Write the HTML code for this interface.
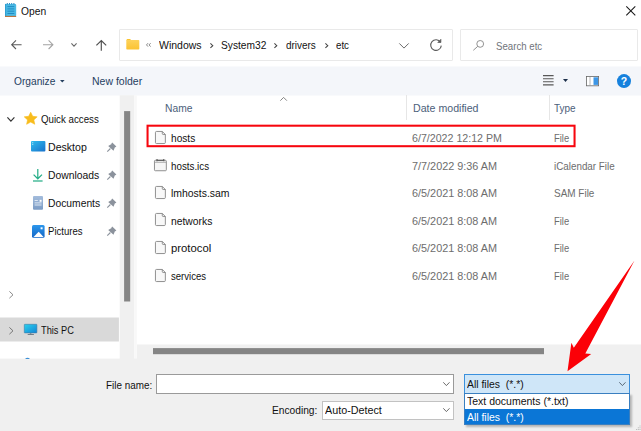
<!DOCTYPE html>
<html><head><meta charset="utf-8">
<style>
*{box-sizing:border-box;margin:0;padding:0}
html,body{width:641px;height:431px;overflow:hidden;background:#fff}
body{font-family:"Liberation Sans",sans-serif;font-size:12px;color:#111;position:relative}
.a{position:absolute}
.t{position:absolute;white-space:nowrap;line-height:14px;font-size:12px;transform-origin:0 0}
svg{position:absolute;overflow:visible}
</style></head><body>
<!-- panels / backgrounds -->
<svg style="left:0;top:0" width="641" height="431" viewBox="0 0 641 431">
<rect x="0" y="66.500" width="641" height="29" fill="#f4f6fa"/>
<rect x="119.700" y="95.300" width="14.500" height="264" fill="#f0f0f0"/>
<rect x="134.200" y="95.300" width="2.600" height="264" fill="#f8f8f8"/>
<rect x="124.100" y="111.100" width="6.100" height="190.400" fill="#858585"/>
<rect x="137" y="344.500" width="504" height="15" fill="#f0f0f0"/>
<rect x="153" y="348.100" width="391" height="6.100" fill="#858585"/>
<rect x="0" y="317.500" width="118.900" height="24" fill="#d9d9d9"/>
<rect x="0" y="358.600" width="641" height="73" fill="#f0f0f0"/>
</svg>
<!-- title bar -->
<svg style="left:5.300px;top:3px" width="11.200" height="14" viewBox="0 0 11.200 14">
<rect x="0" y="0.900" width="11.200" height="12.300" rx="1" fill="#4ab9e4"/>
<rect x="0" y="0.900" width="1.200" height="12.300" fill="#2f9fd2"/>
<rect x="0" y="12.900" width="11.200" height="1.100" fill="#b9733f"/>
<path d="M2.300 0V1.500M4.500 0V1.500M6.700 0V1.500M8.900 0V1.500" stroke="#2f8fc6" stroke-width="1.100"/>
<path d="M2.400 3.600H9.300M2.400 5.900H9.300M2.400 8.200H9.300M2.400 10.500H9.300" stroke="#1f8dc3" stroke-width="1"/>
</svg>
<svg style="left:626px;top:6px" width="10" height="10" viewBox="0 0 10 10"><path d="M0.300 0.300L9.300 9.300M9.300 0.300L0.300 9.300" stroke="#1a1a1a" stroke-width="1.050" fill="none"/></svg>

<!-- nav arrows -->
<svg style="left:10.900px;top:40.300px" width="10.600" height="9.400" viewBox="0 0 10.600 9.400"><path d="M10.600 4.700H0.900M5 0.400L0.700 4.700L5 9" stroke="#5a5a5a" stroke-width="1.100" fill="none"/></svg>
<svg style="left:42.700px;top:40.300px" width="10.600" height="9.400" viewBox="0 0 10.600 9.400"><path d="M0 4.700H9.700M5.600 0.400L9.900 4.700L5.600 9" stroke="#a3a3a3" stroke-width="1.100" fill="none"/></svg>
<svg style="left:70.800px;top:42.800px" width="6" height="3.800" viewBox="0 0 6 3.800"><path d="M0.400 0.400L3 3.100L5.600 0.400" stroke="#6a6a6a" stroke-width="1.100" fill="none"/></svg>
<svg style="left:95.900px;top:40.300px" width="10.600" height="10.700" viewBox="0 0 10.600 10.700"><path d="M5.300 10.700V0.900M0.400 5.400L5.300 0.500L10.200 5.400" stroke="#4f4f4f" stroke-width="1.150" fill="none"/></svg>

<!-- address box -->
<div class="a" style="left:119px;top:29px;width:334px;height:32px;border:1px solid #e9e9e9;border-radius:1px;background:#fff"></div>
<svg style="left:126.400px;top:38.900px" width="13.300" height="10.400" viewBox="0 0 13.300 10.400"><defs><linearGradient id="gf" x1="0" y1="0" x2="0" y2="1"><stop offset="0" stop-color="#fdd25a"/><stop offset="1" stop-color="#fbc332"/></linearGradient></defs><path d="M0.600 0.800Q0.600 0 1.400 0H4Q4.700 0 4.700 0.800V2H0.600Z" fill="#fbc42e"/><rect x="0.300" y="1.100" width="13" height="9.300" rx="0.700" fill="url(#gf)"/></svg>
<svg style="left:146.200px;top:43.200px" width="5" height="3.800" viewBox="0 0 5 3.800"><path d="M2 0.200L0.500 1.900L2 3.600M4.600 0.200L3.100 1.900L4.600 3.600" stroke="#777" stroke-width="0.900" fill="none"/></svg>
<svg style="left:209.900px;top:43px" width="3.200" height="5.400" viewBox="0 0 3.200 5.400"><path d="M0.400 0.400L2.800 2.700L0.400 5" stroke="#444" stroke-width="1.050" fill="none"/></svg>
<svg style="left:274.200px;top:43px" width="3.200" height="5.400" viewBox="0 0 3.200 5.400"><path d="M0.400 0.400L2.800 2.700L0.400 5" stroke="#444" stroke-width="1.050" fill="none"/></svg>
<svg style="left:324.700px;top:43px" width="3.200" height="5.400" viewBox="0 0 3.200 5.400"><path d="M0.400 0.400L2.800 2.700L0.400 5" stroke="#444" stroke-width="1.050" fill="none"/></svg>
<svg style="left:398.500px;top:42.500px" width="10" height="6" viewBox="0 0 10 6"><path d="M0.300 0.400L5 5.100L9.700 0.400" stroke="#5a5a5a" stroke-width="0.900" fill="none"/></svg>
<svg style="left:430px;top:39px" width="13" height="12" viewBox="430 39 13 12"><path d="M441.300 45.600A5.300 5.300 0 1 1 440.500 42.200" stroke="#5c5c5c" stroke-width="1.100" fill="none"/><path d="M440.900 39.300V42.500H437.800Z" fill="#5c5c5c" stroke="#5c5c5c" stroke-width="0.700" stroke-linejoin="round"/></svg>

<!-- search box -->
<div class="a" style="left:460px;top:29px;width:178px;height:32px;border:1px solid #e9e9e9;border-radius:1px;background:#fff"></div>
<svg style="left:473px;top:39.500px" width="11" height="11" viewBox="0 0 11 11"><circle cx="7.200" cy="3.900" r="3.400" stroke="#868686" stroke-width="0.900" fill="none"/><path d="M4.700 6.400L0.300 10.300" stroke="#868686" stroke-width="0.900"/></svg>

<!-- toolbar icons -->
<svg style="left:60px;top:79.500px" width="5" height="3" viewBox="0 0 5 3"><path d="M0 0H4.600L2.300 2.600Z" fill="#26405f"/></svg>
<svg style="left:542.500px;top:75px" width="10.600" height="10.600" viewBox="0 0 10.600 10.600"><path d="M0 0.700H10.600M0 3.750H10.600M0 6.800H10.600M0 9.850H10.600" stroke="#585858" stroke-width="1.150"/></svg>
<svg style="left:562.500px;top:79px" width="5" height="3" viewBox="0 0 5 3"><path d="M0 0H5L2.500 3Z" fill="#1c2f4a"/></svg>
<svg style="left:586px;top:75.500px" width="13" height="10" viewBox="0 0 13 10"><rect x="0.400" y="0.400" width="12.200" height="9.400" fill="#fff" stroke="#666" stroke-width="0.800"/><rect x="7.500" y="1.300" width="4.600" height="7.600" fill="#3d96e6"/><path d="M4 0.800V9.200" stroke="#888" stroke-width="0.600"/></svg>
<svg style="left:617.400px;top:73.500px" width="14" height="14.400" viewBox="0 0 14 14.400"><circle cx="7" cy="7.100" r="7" fill="#1681dd"/><text x="7" y="11" text-anchor="middle" font-family="Liberation Sans, sans-serif" font-weight="bold" font-size="10.500" fill="#fff">?</text></svg>

<!-- left pane icons -->
<svg style="left:7px;top:116.500px" width="8" height="5" viewBox="0 0 8 5"><path d="M0.400 0.400L3.900 4.200L7.400 0.400" stroke="#333" stroke-width="1.200" fill="none"/></svg>
<svg style="left:24px;top:112.300px" width="13.400" height="12.400" viewBox="0 0 14 13"><path d="M7 0.200L9.100 4.500L13.800 5.100L10.300 8.300L11.300 12.900L7 10.600L2.700 12.900L3.700 8.300L0.200 5.100L4.900 4.500Z" fill="#f8bc1c" stroke="#f8bc1c" stroke-width="0.600" stroke-linejoin="round"/></svg>

<svg style="left:30.700px;top:141.300px" width="14.400" height="10.400" viewBox="0 0 14.400 10.400"><defs><linearGradient id="gd" x1="0" y1="0" x2="1" y2="1"><stop offset="0" stop-color="#2fbdee"/><stop offset="1" stop-color="#1872cc"/></linearGradient></defs><rect width="14.400" height="10.400" rx="1" fill="url(#gd)"/><rect x="1.300" y="1.300" width="0.900" height="0.900" fill="#e8f8ff"/><rect x="1.300" y="3" width="0.900" height="0.900" fill="#d0f0ff"/></svg>
<svg style="left:33px;top:169px" width="9.600" height="12.800" viewBox="0 0 9.600 12.800"><path d="M4.800 0V9.600M0.600 5.600L4.800 9.800L9 5.600" stroke="#27ae88" stroke-width="1.250" fill="none"/><path d="M0 12H9.600" stroke="#27ae88" stroke-width="1.250"/></svg>
<svg style="left:33px;top:196px" width="10" height="13.700" viewBox="0 0 10 13.700"><defs><linearGradient id="gdoc" x1="0" y1="0" x2="0" y2="1"><stop offset="0" stop-color="#a3bcdc"/><stop offset="1" stop-color="#7c9cc5"/></linearGradient></defs><rect width="10" height="13.700" rx="1" fill="url(#gdoc)"/><rect x="6.600" y="3.800" width="2" height="2" fill="#fff"/><path d="M1.600 4.500H4.800M1.600 6.900H8.600M1.600 9H8.600" stroke="#e6eef8" stroke-width="0.900"/></svg>
<svg style="left:31.500px;top:224.800px" width="12.600" height="12.800" viewBox="0 0 12.600 12.800"><defs><linearGradient id="gpic" x1="0" y1="0" x2="0" y2="1"><stop offset="0" stop-color="#2c97ec"/><stop offset="1" stop-color="#1466c6"/></linearGradient></defs><rect width="12.600" height="12.800" rx="1.500" fill="url(#gpic)"/><path d="M1.500 12.100L6.700 6.700L11.600 12.100Z" fill="#fff"/><rect x="8.600" y="2.300" width="2" height="2" fill="#fff"/></svg>

<svg style="left:107px;top:141.7px" width="10" height="10" viewBox="0 0 10 10"><path d="M5.200 0.400L9.400 4.500L8.300 5.300L7.900 5.200L6.500 8.700L1.200 3.900L4.600 2.100L4.400 1.500Z" fill="#8b929c"/><path d="M0.300 9.600L3.400 6.500" stroke="#8b929c" stroke-width="1.100"/></svg>
<svg style="left:107px;top:169.8px" width="10" height="10" viewBox="0 0 10 10"><path d="M5.200 0.400L9.400 4.500L8.300 5.300L7.900 5.200L6.500 8.700L1.200 3.900L4.600 2.100L4.400 1.500Z" fill="#8b929c"/><path d="M0.300 9.600L3.400 6.500" stroke="#8b929c" stroke-width="1.100"/></svg>
<svg style="left:107px;top:197.9px" width="10" height="10" viewBox="0 0 10 10"><path d="M5.200 0.400L9.400 4.500L8.300 5.300L7.900 5.200L6.500 8.700L1.200 3.900L4.600 2.100L4.400 1.500Z" fill="#8b929c"/><path d="M0.300 9.600L3.400 6.500" stroke="#8b929c" stroke-width="1.100"/></svg>
<svg style="left:107px;top:226px" width="10" height="10" viewBox="0 0 10 10"><path d="M5.200 0.400L9.400 4.500L8.300 5.300L7.900 5.200L6.500 8.700L1.200 3.900L4.600 2.100L4.400 1.500Z" fill="#8b929c"/><path d="M0.300 9.600L3.400 6.500" stroke="#8b929c" stroke-width="1.100"/></svg>

<svg style="left:8.700px;top:291.300px" width="5" height="8" viewBox="0 0 5 8"><path d="M0.400 0.400L4 3.800L0.400 7.200" stroke="#8a8a8a" stroke-width="1" fill="none"/></svg>
<svg style="left:8.700px;top:326.500px" width="5" height="8" viewBox="0 0 5 8"><path d="M0.400 0.400L4 3.800L0.400 7.200" stroke="#777" stroke-width="1" fill="none"/></svg>
<svg style="left:24px;top:323.800px" width="13.200" height="11.200" viewBox="0 0 13.200 11.200"><defs><linearGradient id="gpc" x1="0" y1="0" x2="1" y2="1"><stop offset="0" stop-color="#2ad2ec"/><stop offset="1" stop-color="#1384d6"/></linearGradient></defs><rect x="0.300" y="0.300" width="12.600" height="8.600" rx="0.500" fill="url(#gpc)" stroke="#3f7aa6" stroke-width="0.600"/><rect x="5.800" y="9.100" width="1.600" height="1" fill="#7a8a96"/><rect x="3.700" y="10" width="6.200" height="0.900" fill="#66747f"/></svg>
<svg style="left:25px;top:357px" width="5" height="2" viewBox="0 0 5 2"><path d="M0 2Q2.500 -0.500 5 2Z" fill="#3a8fd6"/></svg>

<!-- list header -->
<svg style="left:279.600px;top:96.800px" width="7.200" height="4" viewBox="0 0 7.200 4"><path d="M0.300 3.700L3.600 0.400L6.900 3.700" stroke="#777" stroke-width="0.900" fill="none"/></svg>
<div class="a" style="left:406px;top:95px;width:1px;height:25px;background:#e6e6e6"></div>
<div class="a" style="left:549px;top:95px;width:1px;height:25px;background:#e6e6e6"></div>

<!-- red highlight -->
<svg style="left:0;top:0" width="641" height="431" viewBox="0 0 641 431"><rect x="147.550" y="125.700" width="427" height="20.500" fill="none" stroke="#f7060e" stroke-width="2.050"/></svg>

<svg style="left:155.100px;top:130.8px" width="10.800" height="13" viewBox="0 0 10.800 13"><path d="M0.450 1.500Q0.450 0.450 1.500 0.450H7.300L10.350 3.500V11.500Q10.350 12.550 9.300 12.550H1.500Q0.450 12.550 0.450 11.500Z" fill="#f8f8f8" stroke="#838383" stroke-width="0.900"/><path d="M7.300 0.450V2.600Q7.300 3.500 8.200 3.500H10.350" fill="none" stroke="#838383" stroke-width="0.900"/></svg>
<svg style="left:154.200px;top:158.600px" width="12.800" height="12.200" viewBox="0 0 12.800 12.200"><rect x="0.450" y="1.300" width="11.900" height="10.450" rx="0.900" fill="#f6f6f6" stroke="#838383" stroke-width="0.900"/><path d="M0.450 3.300H12.350" stroke="#9a9a9a" stroke-width="0.800"/><path d="M3.200 1.300H9.600" stroke="#555" stroke-width="1"/><path d="M3 0V2.200M9.800 0V2.200" stroke="#555" stroke-width="1.100"/></svg>
<svg style="left:155.100px;top:185.8px" width="10.800" height="13" viewBox="0 0 10.800 13"><path d="M0.450 1.500Q0.450 0.450 1.500 0.450H7.300L10.350 3.500V11.500Q10.350 12.550 9.300 12.550H1.500Q0.450 12.550 0.450 11.500Z" fill="#f8f8f8" stroke="#838383" stroke-width="0.900"/><path d="M7.300 0.450V2.600Q7.300 3.500 8.200 3.500H10.350" fill="none" stroke="#838383" stroke-width="0.900"/></svg>
<svg style="left:155.100px;top:213.3px" width="10.800" height="13" viewBox="0 0 10.800 13"><path d="M0.450 1.500Q0.450 0.450 1.500 0.450H7.300L10.350 3.500V11.500Q10.350 12.550 9.300 12.550H1.500Q0.450 12.550 0.450 11.500Z" fill="#f8f8f8" stroke="#838383" stroke-width="0.900"/><path d="M7.300 0.450V2.600Q7.300 3.500 8.200 3.500H10.350" fill="none" stroke="#838383" stroke-width="0.900"/></svg>
<svg style="left:155.100px;top:240.9px" width="10.800" height="13" viewBox="0 0 10.800 13"><path d="M0.450 1.500Q0.450 0.450 1.500 0.450H7.300L10.350 3.500V11.500Q10.350 12.550 9.300 12.550H1.500Q0.450 12.550 0.450 11.500Z" fill="#f8f8f8" stroke="#838383" stroke-width="0.900"/><path d="M7.300 0.450V2.600Q7.300 3.500 8.200 3.500H10.350" fill="none" stroke="#838383" stroke-width="0.900"/></svg>
<svg style="left:155.100px;top:268.5px" width="10.800" height="13" viewBox="0 0 10.800 13"><path d="M0.450 1.500Q0.450 0.450 1.500 0.450H7.300L10.350 3.500V11.500Q10.350 12.550 9.300 12.550H1.500Q0.450 12.550 0.450 11.500Z" fill="#f8f8f8" stroke="#838383" stroke-width="0.900"/><path d="M7.300 0.450V2.600Q7.300 3.500 8.200 3.500H10.350" fill="none" stroke="#838383" stroke-width="0.900"/></svg>

<!-- bottom panel controls -->
<div class="a" style="left:156px;top:373.500px;width:298px;height:20.500px;border:1px solid #9a9a9a;background:#fff"></div>
<svg style="left:443px;top:381.600px" width="7" height="4" viewBox="0 0 7 4"><path d="M0.300 0.300L3.400 3.600L6.500 0.300" stroke="#5a5a5a" stroke-width="0.900" fill="none"/></svg>
<div class="a" style="left:464px;top:373.500px;width:166px;height:20px;border:1px solid #3a90dd;background:#cfe6f8"></div>
<svg style="left:618.700px;top:381.600px" width="7" height="4" viewBox="0 0 7 4"><path d="M0.300 0.300L3.400 3.600L6.500 0.300" stroke="#4a5a6a" stroke-width="0.900" fill="none"/></svg>
<div class="a" style="left:321.500px;top:400.500px;width:132.500px;height:19.500px;border:1px solid #c2c2c2;background:#fff"></div>
<svg style="left:443px;top:408.200px" width="7" height="4" viewBox="0 0 7 4"><path d="M0.300 0.300L3.400 3.600L6.500 0.300" stroke="#5a5a5a" stroke-width="0.900" fill="none"/></svg>

<!-- dropdown list -->
<div class="a" style="left:464px;top:393px;width:166px;height:31.500px;border:1px solid #3a7fc0;background:#fff;box-shadow:1.500px 1.500px 2px rgba(0,0,0,0.25)"></div>
<div class="a" style="left:465px;top:409.200px;width:164px;height:14.500px;background:#0b76d6"></div>

<div class="t" style="left:21.00px;top:3.69px;color:#111;font-size:11px;transform:scaleX(0.9331)">Open</div>
<div class="t" style="left:158.50px;top:37.99px;color:#111;font-size:11px;transform:scaleX(0.9529)">Windows</div>
<div class="t" style="left:221.00px;top:37.99px;color:#111;font-size:11px;transform:scaleX(0.9264)">System32</div>
<div class="t" style="left:285.90px;top:37.99px;color:#111;font-size:11px;transform:scaleX(0.9043)">drivers</div>
<div class="t" style="left:335.80px;top:37.99px;color:#111;font-size:11px;transform:scaleX(0.8831)">etc</div>
<div class="t" style="left:495.60px;top:38.69px;color:#6f737a;font-size:11px;transform:scaleX(0.8779)">Search etc</div>
<div class="t" style="left:13.80px;top:73.79px;color:#26405f;font-size:11px;transform:scaleX(0.9255)">Organize</div>
<div class="t" style="left:91.50px;top:73.79px;color:#26405f;font-size:11px;transform:scaleX(0.9544)">New folder</div>
<div class="t" style="left:40.80px;top:111.69px;color:#111;font-size:11px;transform:scaleX(0.8830)">Quick access</div>
<div class="t" style="left:47.90px;top:140.09px;color:#111;font-size:11px;transform:scaleX(0.9618)">Desktop</div>
<div class="t" style="left:47.90px;top:168.19px;color:#111;font-size:11px;transform:scaleX(0.9414)">Downloads</div>
<div class="t" style="left:47.90px;top:196.29px;color:#111;font-size:11px;transform:scaleX(0.9370)">Documents</div>
<div class="t" style="left:47.90px;top:224.39px;color:#111;font-size:11px;transform:scaleX(0.8699)">Pictures</div>
<div class="t" style="left:41.20px;top:322.69px;color:#111;font-size:11px;transform:scaleX(0.8398)">This PC</div>
<div class="t" style="left:164.50px;top:101.09px;color:#4c607a;font-size:11px;transform:scaleX(0.9341)">Name</div>
<div class="t" style="left:412.80px;top:101.09px;color:#4c607a;font-size:11px;transform:scaleX(0.9653)">Date modified</div>
<div class="t" style="left:554.10px;top:101.09px;color:#4c607a;font-size:11px;transform:scaleX(0.9060)">Type</div>
<div class="t" style="left:171.40px;top:130.99px;color:#111;font-size:11px;transform:scaleX(0.9219)">hosts</div>
<div class="t" style="left:171.40px;top:158.69px;color:#111;font-size:11px;transform:scaleX(0.8893)">hosts.ics</div>
<div class="t" style="left:171.40px;top:186.09px;color:#111;font-size:11px;transform:scaleX(0.9485)">lmhosts.sam</div>
<div class="t" style="left:171.40px;top:213.89px;color:#111;font-size:11px;transform:scaleX(0.9390)">networks</div>
<div class="t" style="left:171.40px;top:241.39px;color:#111;font-size:11px;transform:scaleX(1.0287)">protocol</div>
<div class="t" style="left:171.40px;top:268.99px;color:#111;font-size:11px;transform:scaleX(0.8692)">services</div>
<div class="t" style="left:412.40px;top:130.99px;color:#6d6d6d;font-size:11px;transform:scaleX(0.9677)">6/7/2022 12:12 PM</div>
<div class="t" style="left:412.40px;top:158.69px;color:#6d6d6d;font-size:11px;transform:scaleX(0.9864)">7/7/2022 9:36 AM</div>
<div class="t" style="left:412.40px;top:186.09px;color:#6d6d6d;font-size:11px;transform:scaleX(0.9864)">6/5/2021 8:08 AM</div>
<div class="t" style="left:412.40px;top:213.89px;color:#6d6d6d;font-size:11px;transform:scaleX(0.9864)">6/5/2021 8:08 AM</div>
<div class="t" style="left:412.40px;top:241.39px;color:#6d6d6d;font-size:11px;transform:scaleX(0.9864)">6/5/2021 8:08 AM</div>
<div class="t" style="left:412.40px;top:268.99px;color:#6d6d6d;font-size:11px;transform:scaleX(0.9864)">6/5/2021 8:08 AM</div>
<div class="t" style="left:554.10px;top:130.99px;color:#6d6d6d;font-size:11px;transform:scaleX(0.8576)">File</div>
<div class="t" style="left:554.10px;top:158.69px;color:#6d6d6d;font-size:11px;transform:scaleX(0.8945)">iCalendar File</div>
<div class="t" style="left:554.10px;top:186.09px;color:#6d6d6d;font-size:11px;transform:scaleX(0.9056)">SAM File</div>
<div class="t" style="left:554.10px;top:213.89px;color:#6d6d6d;font-size:11px;transform:scaleX(0.8576)">File</div>
<div class="t" style="left:554.10px;top:241.39px;color:#6d6d6d;font-size:11px;transform:scaleX(0.8576)">File</div>
<div class="t" style="left:554.10px;top:268.99px;color:#6d6d6d;font-size:11px;transform:scaleX(0.8576)">File</div>
<div class="t" style="left:105.70px;top:377.89px;color:#111;font-size:11px;transform:scaleX(0.8987)">File name:</div>
<div class="t" style="left:272.40px;top:403.19px;color:#111;font-size:11px;transform:scaleX(0.9270)">Encoding:</div>
<div class="t" style="left:324.50px;top:403.19px;color:#111;font-size:11px;transform:scaleX(0.9789)">Auto-Detect</div>
<div class="t" style="left:467.00px;top:376.79px;color:#111;font-size:11px;transform:scaleX(0.9471)">All files &nbsp;(*.*)</div>
<div class="t" style="left:467.00px;top:394.49px;color:#111;font-size:11px;transform:scaleX(0.9545)">Text documents (*.txt)</div>
<div class="t" style="left:467.00px;top:409.59px;color:#fff;font-size:11px;transform:scaleX(0.9471)">All files &nbsp;(*.*)</div>

<!-- red arrow -->
<svg style="left:0;top:0" width="641" height="431" viewBox="0 0 641 431"><path d="M634.500 260.500L573.800 347.800L571.400 342.700L567.500 371.200L591.200 354.100L585.300 353.400Z" fill="#fb0007"/></svg>
<svg style="left:636px;top:425px" width="5" height="5" viewBox="0 0 5 5"><path d="M4 0.500V1.500M2.300 2.300V3.300M4 2.300V3.300M0.600 4V5M2.300 4V5M4 4V5" stroke="#b8b8b8" stroke-width="1"/></svg>
</body></html>
